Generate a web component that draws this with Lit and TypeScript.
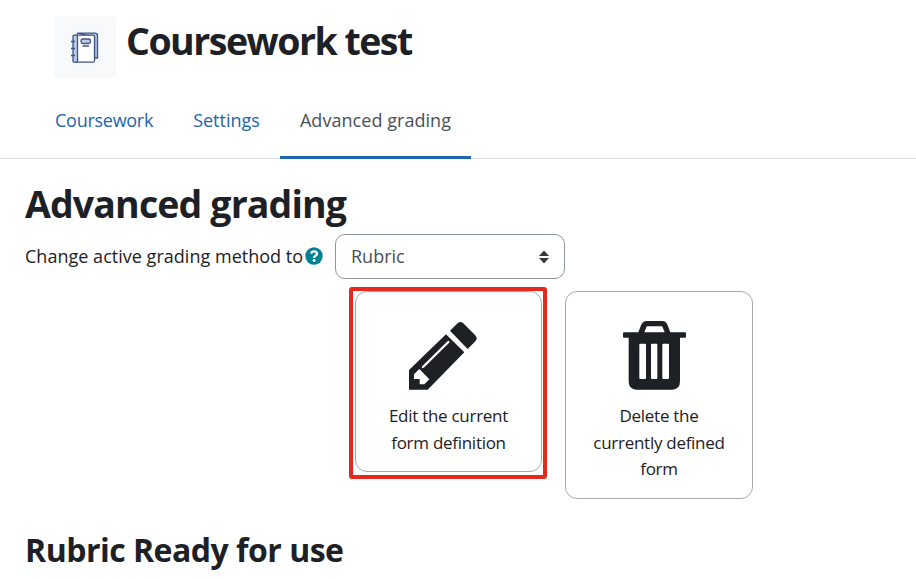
import { LitElement, html, css } from "lit";
import { customElement } from "lit/decorators.js";

@customElement("app-root")
export class AppRoot extends LitElement {
  static styles = css`
    :host {
      display: block;
      height: 579px;
      overflow: hidden;
      background: #fff;
      color: #1d2125;
      font-family: "Open Sans", "Noto Sans", sans-serif;
      font-size: 18px;
      font-weight: 400;
      line-height: 27px;
    }
    * { box-sizing: border-box; }
    h1, h2, h3 { margin: 0; font-weight: 700; white-space: nowrap; }
    header { display: flex; padding: 16px 0 0 54px; height: 83px; }
    .badge {
      width: 62px; height: 63px; border-radius: 5px; background: #f8f9fa;
      display: grid; place-items: center;
    }
    .badge svg { width: 28px; height: 32px; }
    h1 { margin: 1px 0 0 10px; font-size: 37.5px; line-height: 48px; letter-spacing: -1.5px; }
    nav { display: flex; height: 76px; padding-left: 35px; border-bottom: 1px solid #dee2e6; }
    nav a {
      height: 76px; padding: 24px 20px 0; color: #2165ae; white-space: nowrap;
      border-bottom: 3px solid transparent;
    }
    nav a:first-child { letter-spacing: -0.27px; }
    nav a.active { color: #495057; border-bottom-color: #1f68b0; letter-spacing: 0.05px; }
    main { padding: 20px 0 0 25px; }
    h2 { font-size: 37.5px; line-height: 48px; height: 50px; padding-top: 1px; letter-spacing: -0.87px; }
    .row { display: flex; align-items: center; height: 45px; margin-top: 5px; }
    .row label { width: 280px; white-space: nowrap; letter-spacing: 0.02px; }
    .help { width: 18px; height: 18px; margin-top: -1px; }
    .select {
      margin-left: 12px; width: 230px; height: 45px; border: 1px solid #8f959e; border-radius: 10px;
      display: flex; align-items: center; justify-content: space-between; padding: 0 14px 0 15px; color: #495057;
    }
    .select svg { width: 12px; height: 14px; }
    .cards { display: flex; align-items: flex-start; margin: 8px 0 0 324px; height: 220px; }
    .mark {
      width: 198px; height: 192px; border: 4px solid #e8281e; border-radius: 3px; padding: 0 1px 2px 2px;
    }
    .card {
      border: 1px solid #aaa; border-radius: 12px; width: 188px; text-align: center;
      padding-top: 28px; font-size: 17px; line-height: 26.5px; white-space: nowrap; letter-spacing: -0.28px;
    }
    .card svg { display: block; height: 72px; margin-bottom: 11px; fill: #1d2125; }
    .edit { width: 187px; height: 181px; }
    .edit svg { width: 72px; margin-left: 51px; }
    .delete { height: 208px; margin: 4px 0 0 18px; }
    .delete svg { width: 68px; margin-left: 55px; }
    h3 { font-size: 32px; line-height: 42px; margin-top: 22px; letter-spacing: -0.5px; }
  `;

  render() {
    return html`
      <header>
        <div class="badge">
          <svg viewBox="0 0 28 32">
            <path d="M6 1.200h18q2.500 0 2.500 2.500V26h-3V5z" fill="#b9cbe9" stroke="#3f5486" stroke-width="1.300"/>
            <path d="M5 3.200h17q1.500 0 1.500 1.500v24q0 1.500-1.500 1.500H5z" fill="#fff" stroke="#3f5486" stroke-width="1.300"/>
            <rect x="2" y="3.200" width="4.500" height="27" rx="1" fill="#b9cbe9" stroke="#3f5486" stroke-width="1.300"/>
            <rect x="10" y="7" width="9.500" height="4.500" rx="1.800" fill="#b9cbe9" stroke="#3f5486" stroke-width="1.300"/>
            <path d="M11.500 14h6.500M0 9.500h4M0 16.500h4M0 23.500h4" stroke="#3f5486" stroke-width="1.300"/>
          </svg>
        </div>
        <h1>Coursework test</h1>
      </header>
      <nav>
        <a>Coursework</a><a>Settings</a><a class="active">Advanced grading</a>
      </nav>
      <main>
        <h2>Advanced grading</h2>
        <div class="row">
          <label>Change active grading method to</label>
          <svg class="help" viewBox="0 0 18 18">
            <circle cx="9" cy="9" r="8.700" fill="#008196"/>
            <path d="M6 6.600Q6.600 4.300 9.100 4.300 12 4.300 12 6.700 12 8 10.500 8.800 9.100 9.500 9.100 11" fill="none" stroke="#fff" stroke-width="2.300"/>
            <circle cx="9.100" cy="13.500" r="1.400" fill="#fff"/>
          </svg>
          <div class="select"><span>Rubric</span>
            <svg viewBox="0 0 12 14"><path d="M6 0.500l5 5.500H1zM6 13.500l5-5.500H1z" fill="#343a40"/></svg>
          </div>
        </div>
        <div class="cards">
          <div class="mark"><div class="card edit">
            <svg viewBox="201 120 216 216">
              <path fill-rule="evenodd" d="M207 270L318 163 373 217 263 329H207zM238 267L222 283V297H239V313H253L268 298z"/>
              <path d="M330 152L351 131Q360 121 370 130L405 165Q415 175 406 184L383 207z"/>
              <path d="M249 261L325 186" stroke="#fff" stroke-width="7" stroke-linecap="round"/>
            </svg>
            Edit the current<br>form definition
          </div></div>
          <div class="card delete">
            <svg viewBox="183 120 204 216">
              <path fill-rule="evenodd" d="M192 157H235L243 136Q248 123 261 123H306Q319 123 323 136L331 157H375Q378 157 378 160V170Q378 173 375 173H360V304Q360 329 337 329H229Q206 329 206 304V173H192Q189 173 189 170V160Q189 157 192 157zM253 157H314L308 142Q307 139 304 139H263Q260 139 259 142zM241 191Q238 191 238 194V294Q238 297 241 297H255Q258 297 258 294V194Q258 191 255 191zM276 191Q273 191 273 194V294Q273 297 276 297H289Q292 297 292 294V194Q292 191 289 191zM310 191Q307 191 307 194V294Q307 297 310 297H324Q327 297 327 294V194Q327 191 324 191z"/>
            </svg>
            Delete the<br>currently defined<br>form
          </div>
        </div>
        <h3>Rubric Ready for use</h3>
      </main>`;
  }
}
